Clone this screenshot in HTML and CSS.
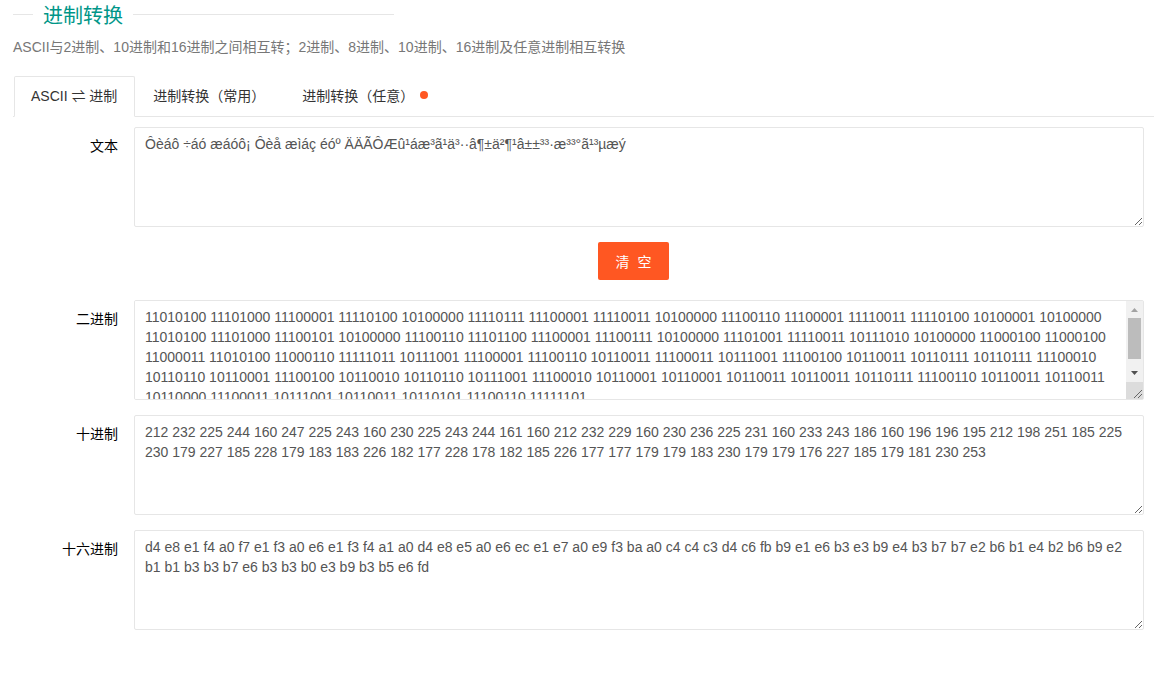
FILE: index.html
```html
<!DOCTYPE html>
<html lang="zh-CN">
<head>
<meta charset="utf-8">
<title>进制转换</title>
<link rel="stylesheet" href="styles.css">
</head>
<body>
<main class="page">
  <fieldset class="field-title"><legend>进制转换</legend></fieldset>
  <p class="desc">ASCII与2进制、10进制和16进制之间相互转；2进制、8进制、10进制、16进制及任意进制相互转换</p>
  <ul class="tabs">
    <li class="tab active">ASCII ⇌ 进制</li>
    <li class="tab">进制转换（常用）</li>
    <li class="tab">进制转换（任意）<span class="dot"></span></li>
  </ul>
  <form class="form">
    <div class="row"><label class="label">文本</label><textarea class="input">Ôèáô ÷áó æáóô¡ Ôèå æìáç éóº ÄÄÃÔÆû¹áæ³ã¹ä³··â¶±ä²¶¹â±±³³·æ³³°ã¹³µæý</textarea></div>
    <div class="actions"><button type="button" class="btn">清 空</button></div>
    <div class="row"><label class="label">二进制</label><div class="input-wrap"><textarea class="input">11010100 11101000 11100001 11110100 10100000 11110111 11100001 11110011 10100000 11100110 11100001 11110011 11110100 10100001 10100000 11010100 11101000 11100101 10100000 11100110 11101100 11100001 11100111 10100000 11101001 11110011 10111010 10100000 11000100 11000100 11000011 11010100 11000110 11111011 10111001 11100001 11100110 10110011 11100011 10111001 11100100 10110011 10110111 10110111 11100010 10110110 10110001 11100100 10110010 10110110 10111001 11100010 10110001 10110001 10110011 10110011 10110111 11100110 10110011 10110011 10110000 11100011 10111001 10110011 10110101 11100110 11111101</textarea>
      <div class="scrollbar">
        <svg class="sb-btn" viewBox="0 0 17 17"><polygon points="8.5,7 5,11 12,11" fill="#a3a3a3"/></svg>
        <div class="sb-track"><div class="sb-thumb"></div></div>
        <svg class="sb-btn" viewBox="0 0 17 17"><polygon points="5,6 12,6 8.5,10" fill="#505050"/></svg>
        <svg class="sb-corner" viewBox="0 0 17 17"><path d="M8 16 L16 8 M12 16 L16 12" stroke="#666" stroke-width="1" fill="none"/></svg>
      </div>
    </div></div>
    <div class="row"><label class="label">十进制</label><textarea class="input">212 232 225 244 160 247 225 243 160 230 225 243 244 161 160 212 232 229 160 230 236 225 231 160 233 243 186 160 196 196 195 212 198 251 185 225 230 179 227 185 228 179 183 183 226 182 177 228 178 182 185 226 177 177 179 179 183 230 179 179 176 227 185 179 181 230 253</textarea></div>
    <div class="row"><label class="label">十六进制</label><textarea class="input">d4 e8 e1 f4 a0 f7 e1 f3 a0 e6 e1 f3 f4 a1 a0 d4 e8 e5 a0 e6 ec e1 e7 a0 e9 f3 ba a0 c4 c4 c3 d4 c6 fb b9 e1 e6 b3 e3 b9 e4 b3 b7 b7 e2 b6 b1 e4 b2 b6 b9 e2 b1 b1 b3 b3 b7 e6 b3 b3 b0 e3 b9 b3 b5 e6 fd</textarea></div>
  </form>
</main>
</body>
</html>
```
FILE: styles.css
```css
* { box-sizing: border-box; }
html, body { margin: 0; padding: 0; background: #fff; }
body {
  font-family: "Liberation Sans", "Noto Sans CJK SC", sans-serif;
  font-size: 14px;
  color: #333;
  overflow: hidden;
}
.page { width: 1154px; height: 677px; padding-left: 13px; }
.field-title {
  width: 381px;
  height: 16px;
  margin: 0;
  padding: 0;
  border: 0;
  border-top: 1px solid #e6e6e6;
}
.field-title legend {
  margin-left: 20px;
  padding: 4px 10px 0;
  font-size: 20px;
  line-height: 25px;
  color: #009688;
}
.desc {
  margin: 8px 0 0;
  font-size: 14px;
  line-height: 20px;
  color: #777;
}
.tabs {
  display: flex;
  list-style: none;
  margin: 19px 0 0;
  padding: 0 0 0 1px;
  height: 41px;
  border-bottom: 1px solid #e6e6e6;
}
.tab {
  display: flex;
  align-items: center;
  height: 40px;
  padding: 0 19px 2px 18px;
  color: #333;
  font-size: 14px;
  white-space: nowrap;
}
.tab.active {
  height: 41px;
  padding: 0 17px 3px 16px;
  border: 1px solid #e6e6e6;
  border-bottom-color: #fff;
  border-radius: 2px 2px 0 0;
}
.dot {
  width: 8px;
  height: 8px;
  margin-left: 6px;
  border-radius: 50%;
  background: #ff5722;
}
.form { padding-top: 10px; padding-left: 11px; }
.row {
  display: grid;
  grid-template-columns: 110px 1010px;
  margin-bottom: 15px;
}
.label {
  padding: 9px 16px 0 0;
  line-height: 20px;
  text-align: right;
  color: #000;
}
.input {
  display: block;
  width: 1010px;
  height: 100px;
  padding: 6px 10px;
  border: 1px solid #e6e6e6;
  border-radius: 2px;
  background: #fff;
  font: inherit;
  line-height: 20px;
  color: #555;
  outline: 0;
}
.input-wrap { position: relative; height: 100px; }
.scrollbar {
  position: absolute;
  top: 1px;
  right: 1px;
  bottom: 1px;
  width: 17px;
  display: flex;
  flex-direction: column;
  background: #f1f1f1;
  pointer-events: none;
}
.sb-btn, .sb-corner { display: block; width: 17px; height: 17px; flex: none; }
.sb-corner { background: #dcdcdc; }
.sb-track { flex: 1; }
.sb-thumb { height: 41px; margin: 0 2px; background: #bcbcbc; }
.actions { display: flex; justify-content: center; margin-bottom: 20px; padding-left: 99px; width: 1120px; }
.btn {
  width: 71px;
  height: 38px;
  padding: 0 0 0 2px;
  border: 0;
  border-radius: 2px;
  background: #ff5722;
  color: #fff;
  font: inherit;
  letter-spacing: 2px;
}
```
